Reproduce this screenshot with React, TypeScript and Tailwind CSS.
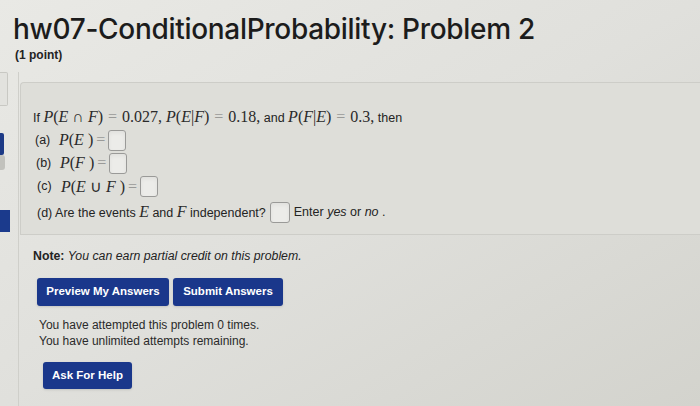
const Var = ({ children }: { children: React.ReactNode }) => (
  <span className="italic">{children}</span>
);

const Box = ({ w = "w-[18px]" }: { w?: string }) => (
  <span className={`inline-block ${w} h-[21px] align-middle rounded-[3px] border border-[#9a9a98] bg-[#ecece9] shadow-inner`} />
);

const Math = ({ children }: { children: React.ReactNode }) => (
  <span className="font-['Liberation_Serif',serif] text-[16px] text-[#2a2a2a]">{children}</span>
);

const Eq = () => <span className="mx-[5px] text-[#9a9a98]">=</span>;

const Eq2 = () => (
  <span className="mx-[3px] text-[#9a9a98] font-['Liberation_Serif',serif] text-[16px]">=</span>
);

export default function App() {
  return (
    <div className="w-[700px] h-[406px] overflow-hidden bg-linear-to-br from-[#e9e9e5] via-[#e0e0dc] to-[#d3d3cd] font-['Liberation_Sans',Arial,sans-serif] text-[#232323] flex flex-col">
      <header className="pl-[13px] pt-[11px] h-[72px] shrink-0">
        <h1 className="font-['Inter',sans-serif] font-medium text-[28px] leading-[36px] tracking-[-0.3px] text-[#1c1c1c]">
          hw07-ConditionalProbability: Problem 2
        </h1>
        <div className="text-[12px] font-bold leading-[16px] pl-[2px]">(1 point)</div>
      </header>

      <div className="flex flex-1">
        {/* side strip */}
        <aside className="w-[19px] shrink-0 flex flex-col border-r border-[#cfcfca]">
          <div className="h-[34px] w-[8px] bg-[#e2e2de] border-y border-r border-[#c8c8c3] rounded-r-[2px]" />
          <div className="h-[22px] mt-[27px] w-[4px] bg-[#1d3a86] rounded-r-[2px]" />
          <div className="h-[15px] w-[5px] bg-[#c2c2bd] rounded-r-[3px]" />
          <div className="h-[22px] mt-[40px] w-[10px] bg-[#1b3a8c]" />
        </aside>

        <main className="flex-1 flex flex-col">
          {/* problem box */}
          <section className="h-[153px] mt-[10px] ml-[1px] bg-[#deded9] border-t border-l border-b border-[#cdcdc8] rounded-tl-[4px] pl-[12px] pt-[24px] text-[12.5px]">
            <p className="leading-[20px] whitespace-nowrap">
              If{" "}
              <Math>
                <Var>P</Var>(<Var>E</Var> ∩ <Var>F</Var>)<Eq />0.027, <Var>P</Var>(<Var>E</Var>|<Var>F</Var>)<Eq />
                0.18,
              </Math>{" "}
              and{" "}
              <Math>
                <Var>P</Var>(<Var>F</Var>|<Var>E</Var>)<Eq />0.3,
              </Math>{" "}
              then
            </p>
            <div className="flex flex-col gap-[1px] mt-[1px]">
              <div className="flex items-center h-[22px] pl-[2px]">
                <span className="w-[24px]">(a)</span>
                <Math>
                  <Var>P</Var>(<Var>E</Var> )
                </Math>
                <Eq2 />
                <Box />
              </div>
              <div className="flex items-center h-[22px] pl-[3px]">
                <span className="w-[24px]">(b)</span>
                <Math>
                  <Var>P</Var>(<Var>F</Var> )
                </Math>
                <Eq2 />
                <Box />
              </div>
              <div className="flex items-center h-[23px] pl-[4px]">
                <span className="w-[24px]">(c)</span>
                <Math>
                  <Var>P</Var>(<Var>E</Var> ∪ <Var>F</Var> )
                </Math>
                <Eq2 />
                <Box />
              </div>
              <div className="flex items-center h-[26px] pl-[4px] whitespace-nowrap">
                <span>
                  (d) Are the events <Math><Var>E</Var></Math> and <Math><Var>F</Var></Math> independent?
                </span>
                <span className="ml-[4px]">
                  <Box w="w-[20px]" />
                </span>
                <span className="ml-[4px]">
                  Enter <i>yes</i> or <i>no</i> .
                </span>
              </div>
            </div>
          </section>

          <p className="ml-[14px] mt-[13px] text-[12.3px] leading-[16px]">
            <b>Note:</b> <i>You can earn partial credit on this problem.</i>
          </p>

          <div className="flex gap-[4px] ml-[18px] mt-[14px]">
            <button className="h-[28px] w-[132px] rounded-[3px] bg-[#1a378b] text-white text-[11.5px] font-bold shadow-sm">
              Preview My Answers
            </button>
            <button className="h-[28px] w-[110px] rounded-[3px] bg-[#1a378b] text-white text-[11.5px] font-bold shadow-sm">
              Submit Answers
            </button>
          </div>

          <div className="ml-[20px] mt-[11px] text-[12px] leading-[16px] text-[#2a2a2a]">
            <p>You have attempted this problem 0 times.</p>
            <p>You have unlimited attempts remaining.</p>
          </div>

          <button className="ml-[24px] mt-[13px] h-[27px] w-[89px] rounded-[3px] bg-[#1a378b] text-white text-[11.5px] font-bold shadow-sm">
            Ask For Help
          </button>
        </main>
      </div>
    </div>
  );
}
